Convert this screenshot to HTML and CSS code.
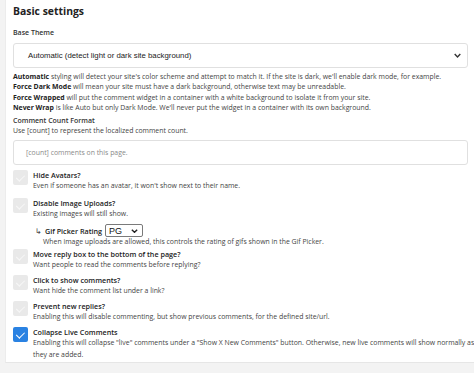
FILE: index.html
```html
<!DOCTYPE html>
<html lang="en">

<head>
    <meta charset="UTF-8">
    <meta name="viewport" content="width=device-width, initial-scale=1.0">
    <title>Basic settings</title>
    <link rel="stylesheet" href="styles.css">
</head>

<body>
    <div id="card">
        <h2 class="title">Basic settings</h2>

        <div class="label first">Base Theme</div>
        <div class="select">
            <span>Automatic (detect light or dark site background)</span>
            <svg class="chev" viewBox="0 0 10 6" width="7" height="5"><path d="M1 1l4 4 4-4" fill="none" stroke="#333" stroke-width="2"/></svg>
        </div>
        <div class="help">
            <div><b>Automatic</b> styling will detect your site's color scheme and attempt to match it. If the site is dark, we'll enable dark mode, for example.</div>
            <div><b>Force Dark Mode</b> will mean your site must have a dark background, otherwise text may be unreadable.</div>
            <div><b>Force Wrapped</b> will put the comment widget in a container with a white background to isolate it from your site.</div>
            <div><b>Never Wrap</b> is like Auto but only Dark Mode. We'll never put the widget in a container with its own background.</div>
        </div>

        <div class="label second">Comment Count Format</div>
        <div class="sub">Use [count] to represent the localized comment count.</div>
        <div class="input">[count] comments on this page.</div>

        <div class="options">
            <div class="option hide">
                <div class="check"></div>
                <div class="text">
                    <div class="name">Hide Avatars?</div>
                    <div class="desc">Even if someone has an avatar, it won't show next to their name.</div>
                </div>
            </div>
            <div class="option">
                <div class="check"></div>
                <div class="text">
                    <div class="name">Disable Image Uploads?</div>
                    <div class="desc">Existing images will still show.</div>
                </div>
            </div>
            <div class="gif">
                <div class="gif-row">
                    <span class="arrow">↳</span>
                    <span class="name">Gif Picker Rating</span>
                    <div class="mini-select">PG
                        <svg viewBox="0 0 10 6" width="7" height="4"><path d="M1 1l4 4 4-4" fill="none" stroke="#222" stroke-width="2"/></svg>
                    </div>
                </div>
                <div class="desc gif-desc">When image uploads are allowed, this controls the rating of gifs shown in the Gif Picker.</div>
            </div>
            <div class="option">
                <div class="check"></div>
                <div class="text">
                    <div class="name">Move reply box to the bottom of the page?</div>
                    <div class="desc">Want people to read the comments before replying?</div>
                </div>
            </div>
            <div class="option">
                <div class="check"></div>
                <div class="text">
                    <div class="name">Click to show comments?</div>
                    <div class="desc">Want hide the comment list under a link?</div>
                </div>
            </div>
            <div class="option">
                <div class="check"></div>
                <div class="text">
                    <div class="name">Prevent new replies?</div>
                    <div class="desc">Enabling this will disable commenting, but show previous comments, for the defined site/url.</div>
                </div>
            </div>
            <div class="option last">
                <div class="check on"></div>
                <div class="text">
                    <div class="name">Collapse Live Comments</div>
                    <div class="desc wide">Enabling this will collapse "live" comments under a "Show X New Comments" button. Otherwise, new live comments will show normally as they are added.</div>
                </div>
            </div>
        </div>
    </div>
</body>

</html>
```

FILE: styles.css
```css
* {
    box-sizing: border-box;
}

body {
    margin: 0;
    background-color: #f3f3f3;
    font-family: "Open Sans", "Noto Sans", sans-serif;
    color: #333;
    width: 474px;
    height: 373px;
    overflow: hidden;
}

#card {
    background-color: white;
    margin-left: 5px;
    width: 475px;
    height: 363px;
    border-left: 1px solid #ececec;
    border-bottom: 1px solid #e6e6e6;
    padding: 4px 6px 0 7px;
}

.title {
    margin: 0;
    font-size: 10.4px;
    font-weight: 700;
    color: #222;
    line-height: 14px;
}

.label {
    font-size: 7px;
    font-weight: 600;
    line-height: 10px;
    color: #333;
}

.label.first {
    margin-top: 10px;
}

.label.second {
    margin-top: 3px;
}

.sub {
    font-size: 6.9px;
    line-height: 10px;
    color: #444;
}

.select,
.input {
    width: 455px;
    height: 25px;
    border: 1px solid #e0e0e0;
    border-radius: 3px;
    display: flex;
    align-items: center;
}

.select {
    margin-top: 5px;
    justify-content: space-between;
    padding: 0 6px 0 14px;
    font-family: "Liberation Sans", Arial, sans-serif;
    font-size: 7.8px;
    color: #222;
}

.input {
    margin-top: 4px;
    padding-left: 12px;
    font-size: 6.9px;
    color: #8a8a8a;
}

.help {
    margin-top: 4px;
    font-size: 6.9px;
    line-height: 10.3px;
    color: #444;
}

.help b {
    color: #222;
    font-weight: 700;
}

.options {
    margin-top: 5px;
}

.option {
    display: flex;
    gap: 5px;
    margin-bottom: 5px;
}

.option.hide {
    margin-bottom: 7px;
}

.check {
    width: 15px;
    height: 15px;
    border-radius: 2px;
    background-color: #e9e9e9;
    flex: none;
    position: relative;
}

.check::after {
    content: "";
    position: absolute;
    left: 5px;
    top: 2.5px;
    width: 3.5px;
    height: 7px;
    border-right: 1.5px solid #f7f7f7;
    border-bottom: 1.5px solid #f7f7f7;
    transform: rotate(45deg);
}

.check.on {
    background-color: #2a82e2;
}

.check.on::after {
    border-color: white;
}

.name {
    font-size: 7.2px;
    font-weight: 600;
    line-height: 10px;
    color: #222;
}

.desc {
    font-size: 6.9px;
    line-height: 11px;
    color: #444;
}

.desc.wide {
    line-height: 12px;
    width: 448px;
}

.gif {
    padding-left: 22px;
    margin-top: 2px;
    margin-bottom: 2px;
}

.gif-row {
    display: flex;
    align-items: center;
    gap: 3px;
    height: 13px;
}

.arrow {
    font-size: 8px;
    color: #444;
    line-height: 10px;
}

.mini-select {
    width: 38px;
    height: 13px;
    border: 1px solid #7a7a7a;
    border-radius: 2px;
    font-family: "Liberation Sans", Arial, sans-serif;
    font-size: 9px;
    display: flex;
    align-items: center;
    justify-content: space-between;
    padding: 0 4px 0 3px;
    color: #111;
}

.gif-desc {
    padding-left: 8px;
    line-height: 10px;
}
```
